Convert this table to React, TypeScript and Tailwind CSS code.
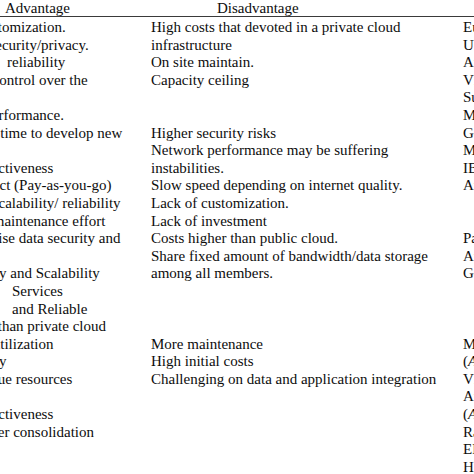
import React from 'react';

type Line = { text: string; indent?: number; italic?: boolean };

interface IGroup {
  advantage: Line[];
  disadvantage: Line[];
  examples: Line[];
}

const l = (text: string, extra: Partial<Line> = {}): Line => ({ text, ...extra });

// one entry per deployment model (private, public, community, hybrid)
const groups: IGroup[] = [
  {
    advantage: [
      l('High customization.'),
      l('Higher security/privacy.'),
      l('reliability', { indent: 63 }),
      l('Greater control over the'),
      l('system'),
      l('Better performance.'),
    ],
    disadvantage: [
      l('High costs that devoted in a private cloud'),
      l('infrastructure'),
      l('On site maintain.'),
      l('Capacity ceiling'),
    ],
    examples: [
      l('Eucalyptus'),
      l('Ubuntu Enterprise Cloud'),
      l('Amazon VPC'),
      l('VMware vCloud'),
      l('Sun Cloud'),
      l('Microsoft'),
    ],
  },
  {
    advantage: [
      l('Reduced time to develop new'),
      l('services'),
      l('Cost effectiveness'),
      l('Cost-effect (Pay-as-you-go)'),
      l('Greater scalability/ reliability'),
      l('Reduce maintenance effort'),
    ],
    disadvantage: [
      l('Higher security risks'),
      l('Network performance may be suffering'),
      l('instabilities.'),
      l('Slow speed depending on internet quality.'),
      l('Lack of customization.'),
      l('Lack of investment'),
    ],
    examples: [
      l('Google App Engine'),
      l('Microsoft Azure'),
      l('IBM Blue Cloud'),
      l('Amazon EC2'),
    ],
  },
  {
    advantage: [
      l('To optimise data security and'),
      l('privacy'),
      l('Flexibility and Scalability'),
      l('Services', { indent: 68 }),
      l('and Reliable', { indent: 68 }),
      l('Cheaper than private cloud'),
    ],
    disadvantage: [
      l('Costs higher than public cloud.'),
      l('Share fixed amount of bandwidth/data storage'),
      l('among all members.'),
    ],
    examples: [l('Pathway'), l('Amazon'), l('Google Apps')],
  },
  {
    advantage: [
      l('Greater utilization'),
      l('Flexibility'),
      l('Use unique resources'),
      l(''),
      l('Cost effectiveness'),
      l('Fast server consolidation'),
    ],
    disadvantage: [
      l('More maintenance'),
      l('High initial costs'),
      l('Challenging on data and application integration'),
    ],
    examples: [
      l('Microsoft'),
      l('(Azure)', { italic: true }),
      l('VMware'),
      l('Amazon'),
      l('(AWS)', { italic: true }),
      l('Rackspace'),
      l('EMC'),
      l('HP'),
    ],
  },
];

const Cell = ({ lines }: { lines: Line[] }) => (
  <div className="flex flex-col">
    {lines.map((line, i) => (
      <div
        key={i}
        className="h-[17.6px] whitespace-nowrap"
        style={line.indent ? { paddingLeft: line.indent } : undefined}
      >
        {line.italic ? (
          <span>
            (<span className="italic">{line.text.slice(1, -1)}</span>)
          </span>
        ) : (
          line.text
        )}
      </div>
    ))}
  </div>
);

export default function App() {
  return (
    <div
      className="w-[474px] h-[474px] overflow-hidden bg-white text-[15px] leading-[17.6px] text-[#0d0d0d]"
      style={{ fontFamily: '"Liberation Serif", "Times New Roman", serif' }}
    >
      <div className="ml-[-56px] w-[800px]">
        {/* Header */}
        <div className="grid grid-cols-[207px_312px_1fr] h-[17px] border-b border-[#3a3a3a] leading-[16px]">
          <div className="pl-[61px]">Advantage</div>
          <div className="pl-[66px]">Disadvantage</div>
          <div className="pl-[60px]">Examples</div>
        </div>
        {/* Body */}
        <div className="mt-[2px]">
          {groups.map((g, i) => (
            <div key={i} className="grid grid-cols-[207px_312px_1fr]">
              <Cell lines={g.advantage} />
              <Cell lines={g.disadvantage} />
              <Cell lines={g.examples} />
            </div>
          ))}
        </div>
      </div>
    </div>
  );
}
